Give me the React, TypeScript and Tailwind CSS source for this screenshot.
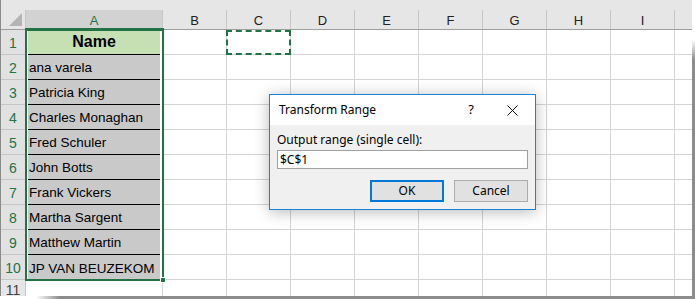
import React from "react";

const names = [
  "ana varela",
  "Patricia King",
  "Charles Monaghan",
  "Fred Schuler",
  "John Botts",
  "Frank Vickers",
  "Martha Sargent",
  "Matthew Martin",
  "JP VAN BEUZEKOM",
];

const cols = ["B", "C", "D", "E", "F", "G", "H", "I"];

function EmptyCells({ h }: { h: string }) {
  return (
    <>
      {cols.map((c) => (
        <div key={c} className={`${h} w-[64px] shrink-0 border-r border-b border-[#d4d4d4] bg-white`} />
      ))}
      <div className={`${h} flex-1 border-b border-[#d4d4d4] bg-white`} />
    </>
  );
}

export default function App() {
  const font = { fontFamily: '"Liberation Sans", Arial, sans-serif' };
  return (
    <div className="relative w-[695px] h-[299px] overflow-hidden bg-white" style={font}>
      <div className="relative flex h-[296px] w-[692px] flex-col border-l border-[#8a8a8a] bg-white">
        {/* top strip */}
        <div className="h-[10px] shrink-0 bg-[#e6e6e6]" />
        {/* column header row */}
        <div className="flex h-[20px] shrink-0 border-b border-[#9e9e9e] bg-[#e6e6e6] text-[13px] text-[#222]">
          <div className="relative w-[25px] shrink-0 border-r border-[#c6c6c6]">
            <div className="absolute bottom-[3px] right-[3px] h-0 w-0 border-b-[13px] border-l-[13px] border-b-[#b4b4b4] border-l-transparent" />
          </div>
          <div className="flex w-[137px] shrink-0 items-center justify-center border-r border-[#c6c6c6] bg-[#d2d2d2] pt-[2px] text-[#217346]">
            A
          </div>
          {cols.map((c) => (
            <div key={c} className="flex w-[64px] shrink-0 items-center justify-center border-r border-[#c6c6c6] pt-[2px]">
              {c}
            </div>
          ))}
          <div className="flex-1" />
        </div>
        {/* rows */}
        {Array.from({ length: 10 }).map((_, i) => (
          <div key={i} className="flex h-[25px] shrink-0">
            <div className="flex h-[25px] w-[25px] shrink-0 items-end justify-center border-r border-b border-[#c6c6c6] bg-[#e1e1e1] pb-0 text-[14px] text-[#217346]">
              {i + 1}
            </div>
            <div className="h-[25px] w-[137px] shrink-0 border-r border-[#d4d4d4] bg-white px-[2px]">
              {i === 0 ? (
                <div className="flex h-[25px] items-end justify-center border-b border-black bg-[#c6e0b4] pb-0 text-[16px] font-bold text-black">
                  Name
                </div>
              ) : (
                <div
                  className={`flex h-[25px] items-end bg-[#c9c9c9] pb-[1px] pl-[1px] text-[13.5px] text-black ${
                    i === 9 ? "" : "border-b border-black"
                  }`}
                >
                  {names[i - 1]}
                </div>
              )}
            </div>
            <EmptyCells h="h-[25px]" />
          </div>
        ))}
        {/* row 11 */}
        <div className="flex flex-1">
          <div className="flex w-[25px] shrink-0 items-end justify-center border-r border-[#c6c6c6] bg-[#e6e6e6] text-[14px] text-[#444]">
            11
          </div>
          <div className="w-[137px] shrink-0 border-r border-[#d4d4d4]" />
          {cols.map((c) => (
            <div key={c} className="w-[64px] shrink-0 border-r border-[#d4d4d4]" />
          ))}
        </div>

        {/* selection of column A */}
        <div className="pointer-events-none absolute left-[24px] top-[29px] h-[252px] w-[139px] border-2 border-[#217346]" />
        <div className="absolute left-[159px] top-[277px] h-[6px] w-[6px] border border-white bg-[#217346]" />
        {/* column A header green underline */}
        <div className="absolute left-[24px] top-[28px] h-[2px] w-[139px] bg-[#217346]" />
        {/* marquee on C1 */}
        <div className="absolute left-[225px] top-[30px] h-[25px] w-[65px] border-2 border-dashed border-[#217346]" />

        {/* dialog */}
        <div
          className="absolute left-[268px] top-[94px] flex h-[116px] w-[267px] flex-col border border-[#1883d7] bg-[#f0f0f0] shadow-[0_2px_14px_rgba(0,0,0,0.28)]"
          style={{ fontFamily: '"Noto Sans", "Liberation Sans", sans-serif' }}
        >
          <div className="flex h-[30px] shrink-0 items-center bg-white pl-[9px] text-[12px] text-black">
            <span>Transform Range</span>
            <span className="ml-auto mr-[33px] text-[13px]">?</span>
            <svg width="11" height="11" viewBox="0 0 11 11" className="mr-[17px]">
              <path d="M0.5 0.5 L10.5 10.5 M10.5 0.5 L0.5 10.5" stroke="#111" strokeWidth="1" />
            </svg>
          </div>
          <div className="flex flex-1 flex-col px-[7px] pt-[7px]">
            <div className="text-[12px] leading-[15px] text-black">Output range (single cell):</div>
            <div className="mt-[3px] flex h-[19px] items-center border border-[#a0a0a0] bg-white pl-[2px] text-[12px] text-black">
              $C$1
            </div>
            <div className="mt-[11px] flex justify-end gap-[10px] pr-0">
              <button className="flex h-[22px] w-[74px] items-center justify-center border-2 border-[#0078d7] bg-[#e1e1e1] text-[12px] text-black">
                OK
              </button>
              <button className="flex h-[22px] w-[74px] items-center justify-center border border-[#adadad] bg-[#e1e1e1] text-[12px] text-black">
                Cancel
              </button>
            </div>
          </div>
        </div>
      </div>
      {/* outer drop shadow strips */}
      <div className="absolute right-0 top-0 h-[299px] w-[3px] bg-[linear-gradient(to_bottom,#ffffff_0px,#ffffff_40px,#8c8c8c_60px,#8c8c8c_100%)]" />
      <div className="absolute bottom-0 left-0 h-[3px] w-[695px] bg-[linear-gradient(to_right,#ffffff_0px,#ffffff_36px,#8c8c8c_60px,#8c8c8c_100%)]" />
    </div>
  );
}
